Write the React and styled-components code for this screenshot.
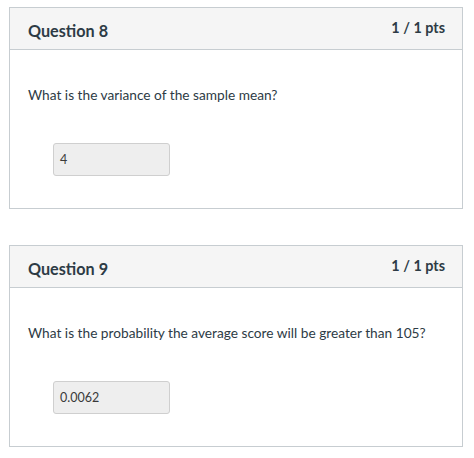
import React from 'react';
import styled, { createGlobalStyle } from 'styled-components';

const GlobalStyle = createGlobalStyle`
	body {
		margin: 0;
		background: #fff;
		font-family: Lato, "Open Sans", sans-serif;
		color: #2d3b45;
	}
`;

const questions = [
	{ id: 8, text: 'What is the variance of the sample mean?', answer: '4' },
	{ id: 9, text: 'What is the probability the average score will be greater than 105?', answer: '0.0062' },
];

const Page = styled.main`
	display: flex;
	flex-direction: column;
	gap: 36px;
	padding: 7px 11px 0 9px;
`;

const Card = styled.section`
	border: 1px solid #c7cdd1;
	background: #fff;
`;

const Header = styled.header`
	height: 42px;
	box-sizing: border-box;
	display: flex;
	justify-content: space-between;
	align-items: flex-start;
	padding: 0 17px 0 18px;
	background: #f5f5f5;
	border-bottom: 1px solid #c7cdd1;
`;

const Title = styled.h3`
	margin: 0;
	padding-top: 12px;
	font-size: 16.2px;
	font-weight: 700;
	line-height: 22px;
`;

const Points = styled.span`
	padding-top: 10px;
	font-size: 14.4px;
	font-weight: 700;
	line-height: 20px;
`;

const Body = styled.div`
	padding: 35px 18px 32px;
`;

const Prompt = styled.p`
	margin: 0;
	font-size: 13.7px;
	line-height: 20px;
`;

const Answer = styled.div`
	margin: 38px 0 0 25px;
	width: 117px;
	height: 33px;
	box-sizing: border-box;
	display: flex;
	align-items: center;
	padding: 0 6px;
	background: #eeeeee;
	border: 1px solid #cfcfcf;
	border-radius: 3px;
	font-size: 12.5px;
	color: #3a3a3a;
`;

const App = () => {
	return (
		<>
			<GlobalStyle />
			<Page>
				{questions.map((q) => (
					<Card key={q.id}>
						<Header>
							<Title>Question {q.id}</Title>
							<Points>1 / 1 pts</Points>
						</Header>
						<Body>
							<Prompt>{q.text}</Prompt>
							<Answer>{q.answer}</Answer>
						</Body>
					</Card>
				))}
			</Page>
		</>
	);
};

export default App;
